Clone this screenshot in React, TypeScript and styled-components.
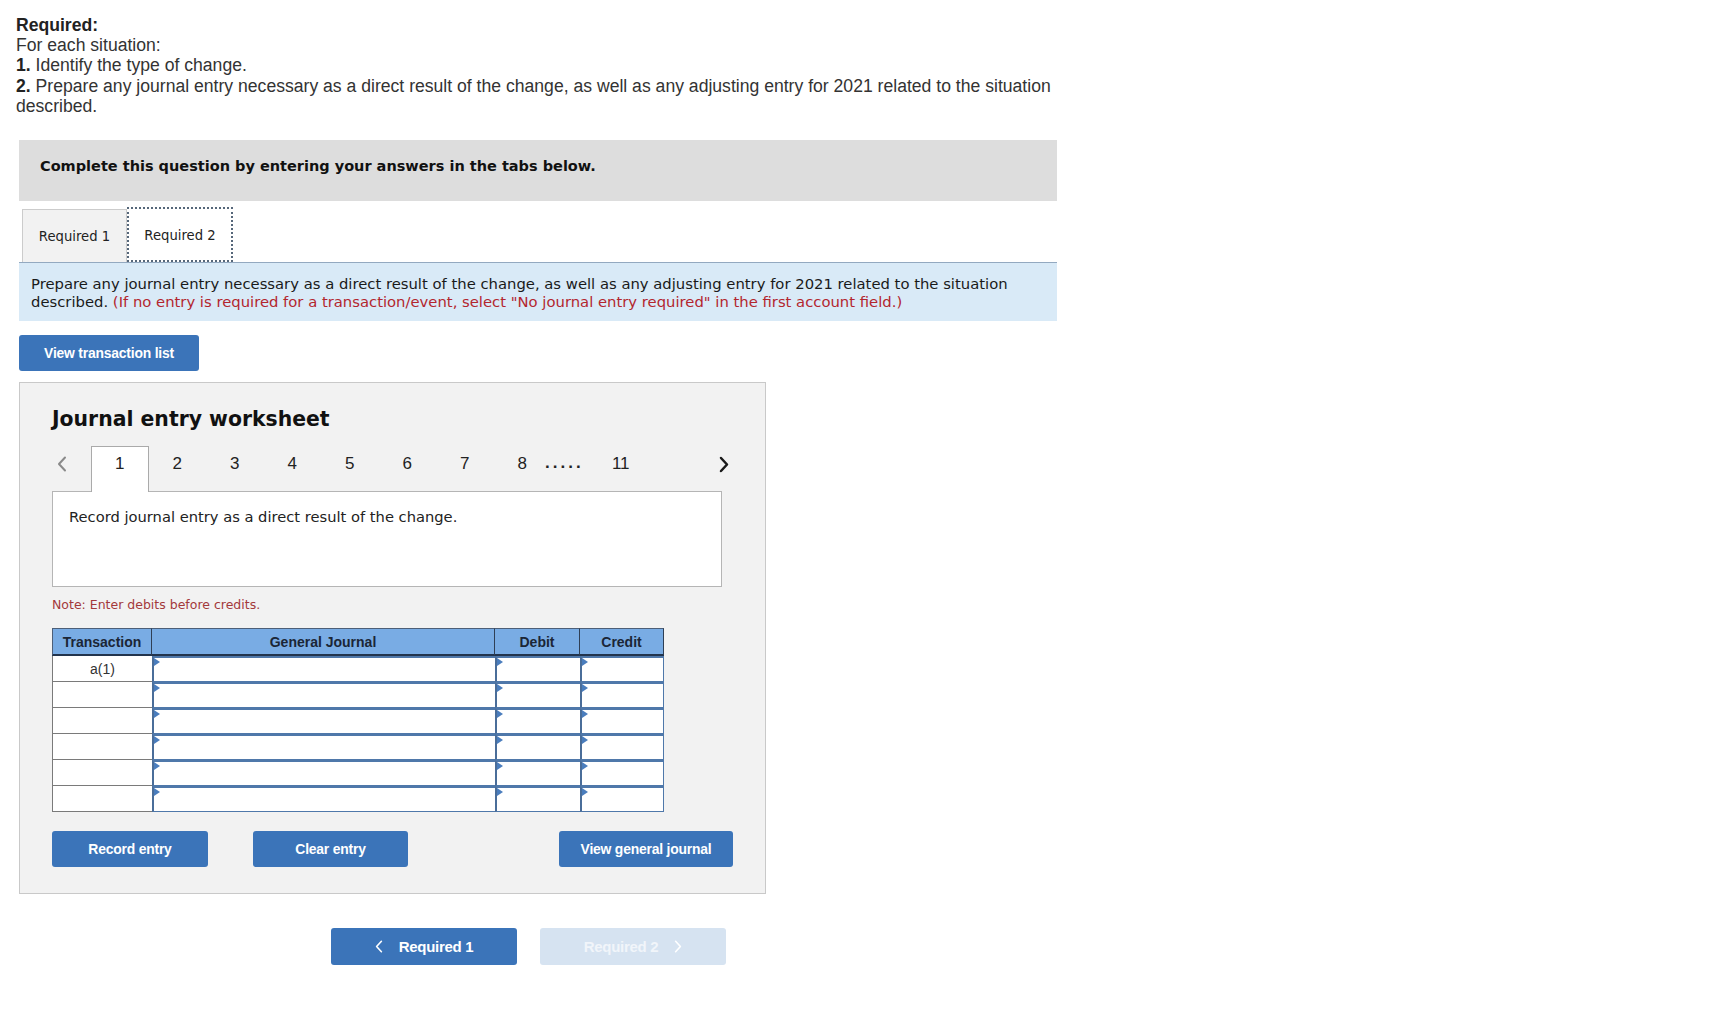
import React from 'react';
import styled, { createGlobalStyle, css } from 'styled-components';

const GlobalStyle = createGlobalStyle`
  body {
    margin: 0;
    background: #ffffff;
  }
`;

const verdana = `"DejaVu Sans", Verdana, sans-serif`;
const arial = `"Liberation Sans", Arial, sans-serif`;
const btnBlue = '#3b74b9';

const Page = styled.div`
  padding: 15px 0 40px 16px;
`;

const Intro = styled.div`
  width: 1052px;
  font-family: ${arial};
  font-size: 17.6px;
  line-height: 20.2px;
  color: #333;
`;

const Block = styled.div``;

const Strong = styled.b`
  color: #222;
`;

const Section = styled.div`
  margin-left: 3px;
  width: 1038px;
`;

const Banner = styled.div`
  box-sizing: border-box;
  margin-top: 24px;
  height: 61px;
  padding: 17px 0 0 21px;
  background: #dddddd;
  font-family: ${verdana};
  font-size: 14.5px;
  line-height: 18px;
  font-weight: bold;
  color: #111;
`;

const TabRow = styled.div`
  margin-top: 6px;
  padding-left: 3px;
  display: flex;
  align-items: flex-end;
  height: 55px;
`;

const Tab = styled.div<{ $active?: boolean }>`
  box-sizing: border-box;
  display: flex;
  align-items: center;
  justify-content: center;
  font-family: ${verdana};
  font-size: 13.2px;
  color: #222;
  ${(p) =>
    p.$active
      ? css`
          width: 106px;
          height: 55px;
          padding-top: 2px;
          background: #fff;
          border: 2px dotted #56677a;
        `
      : css`
          width: 105px;
          height: 53px;
          background: #f2f2f2;
          border: 1px solid #cccccc;
          border-bottom: none;
        `}
`;

const Instruction = styled.div`
  box-sizing: border-box;
  height: 59px;
  padding: 12px 12px 0;
  border-top: 1px solid #93a9c0;
  background: #d9eaf7;
  font-family: ${verdana};
  font-size: 14.8px;
  line-height: 18px;
  color: #1a1a1a;
`;

const Red = styled.span`
  color: #b3262e;
`;

const Button = styled.button<{ $w: number; $disabled?: boolean }>`
  box-sizing: border-box;
  width: ${(p) => p.$w}px;
  height: 36px;
  border: none;
  border-radius: 3px;
  background: ${(p) => (p.$disabled ? '#d6e3f1' : btnBlue)};
  color: ${(p) => (p.$disabled ? '#f1f5fa' : '#fff')};
  font-family: ${arial};
  font-weight: bold;
  font-size: 13.9px;
  letter-spacing: -0.2px;
  display: inline-flex;
  align-items: center;
  justify-content: center;
  gap: 14px;
  padding: 0;
  cursor: pointer;
`;

const TransactionButton = styled(Button)`
  margin: 14px 0 0 3px;
`;

const Panel = styled.div`
  box-sizing: border-box;
  margin: 11px 0 0 3px;
  width: 747px;
  height: 512px;
  padding: 24px 32px 0 32px;
  background: #f2f2f2;
  border: 1px solid #c9c9c9;
`;

const Title = styled.h2`
  margin: 0;
  font-family: ${verdana};
  font-size: 20.4px;
  line-height: 24px;
  font-weight: bold;
  color: #111;
`;

const Steps = styled.div`
  margin-top: 15px;
  width: 670px;
  height: 45px;
  display: flex;
  align-items: flex-start;
  font-family: ${arial};
  font-size: 17px;
  color: #222;
`;

const Chevron = styled.div<{ $w: number }>`
  width: ${(p) => p.$w}px;
  height: 36px;
  display: flex;
  align-items: center;
  justify-content: center;
`;

const Step = styled.div<{ $active?: boolean }>`
  box-sizing: border-box;
  width: 57.5px;
  height: 36px;
  line-height: 36px;
  text-align: center;
  ${(p) =>
    p.$active &&
    css`
      position: relative;
      z-index: 1;
      height: 46px;
      background: #fff;
      border: 1px solid #aaaaaa;
      border-bottom: none;
      line-height: 34px;
    `}
`;

const Dots = styled.div`
  width: 41px;
  height: 36px;
  line-height: 34px;
  font-weight: bold;
  letter-spacing: 3px;
  text-indent: -6px;
  white-space: nowrap;
`;

const Spacer = styled.div<{ $w?: number }>`
  flex: ${(p) => (p.$w ? `0 0 ${p.$w}px` : '1')};
`;

const RecordBox = styled.div`
  box-sizing: border-box;
  width: 670px;
  height: 96px;
  padding: 16px 16px 0;
  background: #fff;
  border: 1px solid #b5b5b5;
  font-family: ${verdana};
  font-size: 14.7px;
  line-height: 18px;
  color: #222;
`;

const Note = styled.div`
  margin-top: 10px;
  font-family: ${verdana};
  font-size: 12.5px;
  line-height: 16px;
  color: #a3393b;
`;

const Table = styled.table`
  margin-top: 15px;
  border-collapse: separate;
  border-spacing: 0;
  table-layout: fixed;
  font-family: ${arial};
`;

const Head = styled.th<{ $w: number; $first?: boolean }>`
  width: ${(p) => p.$w}px;
  height: 25px;
  padding: 0;
  background: #79ace4;
  border-top: 1px solid #4d5f78;
  border-right: 1px solid #2f3f55;
  border-bottom: 2px solid #22344d;
  ${(p) => p.$first && 'border-left: 1px solid #4d5f78;'}
  font-size: 14px;
  font-weight: bold;
  color: #1b2636;
  text-align: center;
  vertical-align: middle;
`;

const Row = styled.tr`
  height: 26px;
`;

const TxCell = styled.td`
  padding: 0;
  background: #fff;
  border-left: 1px solid #7a7a7a;
  border-bottom: 1px solid #7a7a7a;
  font-size: 14px;
  color: #333;
  text-align: center;
  vertical-align: middle;
`;

const InputCell = styled.td<{ $last?: boolean }>`
  position: relative;
  padding: 0;
  background: #fff;
  border-left: 2px solid #4a6d99;
  border-top: 2px solid #4f78aa;
  border-bottom: 1px solid #4f78aa;
  ${(p) => p.$last && 'border-right: 1px solid #4f78aa;'}

  &::before {
    content: '';
    position: absolute;
    top: 0;
    left: 0;
    border-top: 4px solid transparent;
    border-bottom: 4px solid transparent;
    border-left: 6px solid #4a7dbd;
  }
`;

const ActionRow = styled.div`
  margin-top: 19px;
  display: flex;
  gap: 45px;

  & > :last-child {
    margin-left: auto;
  }
`;

const NavRow = styled.div`
  margin: 34px 0 0 315px;
  display: flex;
  gap: 23px;
`;

const NavButton = styled(Button)`
  height: 37px;
  font-size: 15px;
  letter-spacing: -0.3px;
  gap: 16px;
`;

const ChevronIcon = ({ dir, color, w = 10, h = 16, sw = 2 }: { dir: 'left' | 'right'; color: string; w?: number; h?: number; sw?: number }) => (
  <svg width={w} height={h} viewBox="0 0 10 16" fill="none">
    <polyline
      points={dir === 'left' ? '8,1.5 2,8 8,14.5' : '2,1.5 8,8 2,14.5'}
      stroke={color}
      strokeWidth={sw}
      strokeLinecap="round"
      strokeLinejoin="round"
    />
  </svg>
);

const columns = [
  { label: 'Transaction', w: 98 },
  { label: 'General Journal', w: 342 },
  { label: 'Debit', w: 84 },
  { label: 'Credit', w: 83 },
];

const rows = ['a(1)', '', '', '', '', ''];

export default function App() {
  return (
    <Page>
      <GlobalStyle />
      <Intro>
        <Block>
          <Strong>Required:</Strong>
        </Block>
        <Block>For each situation:</Block>
        <Block>
          <Strong>1.</Strong> Identify the type of change.
        </Block>
        <Block>
          <Strong>2.</Strong> Prepare any journal entry necessary as a direct result of the change, as well as any
          adjusting entry for 2021 related to the situation described.
        </Block>
      </Intro>

      <Section>
        <Banner>Complete this question by entering your answers in the tabs below.</Banner>
        <TabRow>
          <Tab>Required 1</Tab>
          <Tab $active>Required 2</Tab>
        </TabRow>
        <Instruction>
          Prepare any journal entry necessary as a direct result of the change, as well as any adjusting entry for
          2021 related to the situation described.{' '}
          <Red>
            (If no entry is required for a transaction/event, select "No journal entry required" in the first account
            field.)
          </Red>
        </Instruction>
      </Section>

      <TransactionButton $w={180}>View transaction list</TransactionButton>

      <Panel>
        <Title>Journal entry worksheet</Title>
        <Steps>
          <Chevron $w={20}>
            <ChevronIcon dir="left" color="#8a8a8a" w={10} h={16} sw={2} />
          </Chevron>
          <Spacer $w={19} />
          {[1, 2, 3, 4, 5, 6, 7, 8].map((n) => (
            <Step key={n} $active={n === 1}>
              {n}
            </Step>
          ))}
          <Dots>.....</Dots>
          <Step>11</Step>
          <Spacer />
          <Chevron $w={12} style={{ marginRight: -8 }}>
            <ChevronIcon dir="right" color="#1a1a1a" w={10} h={17} sw={2.5} />
          </Chevron>
        </Steps>
        <RecordBox>Record journal entry as a direct result of the change.</RecordBox>
        <Note>Note: Enter debits before credits.</Note>

        <Table>
          <thead>
            <tr>
              {columns.map((c, i) => (
                <Head key={c.label} $w={c.w} $first={i === 0}>
                  {c.label}
                </Head>
              ))}
            </tr>
          </thead>
          <tbody>
            {rows.map((t, i) => (
              <Row key={i}>
                <TxCell>{t}</TxCell>
                <InputCell />
                <InputCell />
                <InputCell $last />
              </Row>
            ))}
          </tbody>
        </Table>

        <ActionRow>
          <Button $w={156}>Record entry</Button>
          <Button $w={155}>Clear entry</Button>
          <Button $w={174}>View general journal</Button>
        </ActionRow>
      </Panel>

      <NavRow>
        <NavButton $w={186}>
          <ChevronIcon dir="left" color="#fff" w={8} h={13} sw={2} />
          Required 1
        </NavButton>
        <NavButton $w={186} $disabled>
          Required 2
          <ChevronIcon dir="right" color="#fff" w={8} h={13} sw={2} />
        </NavButton>
      </NavRow>
    </Page>
  );
}
